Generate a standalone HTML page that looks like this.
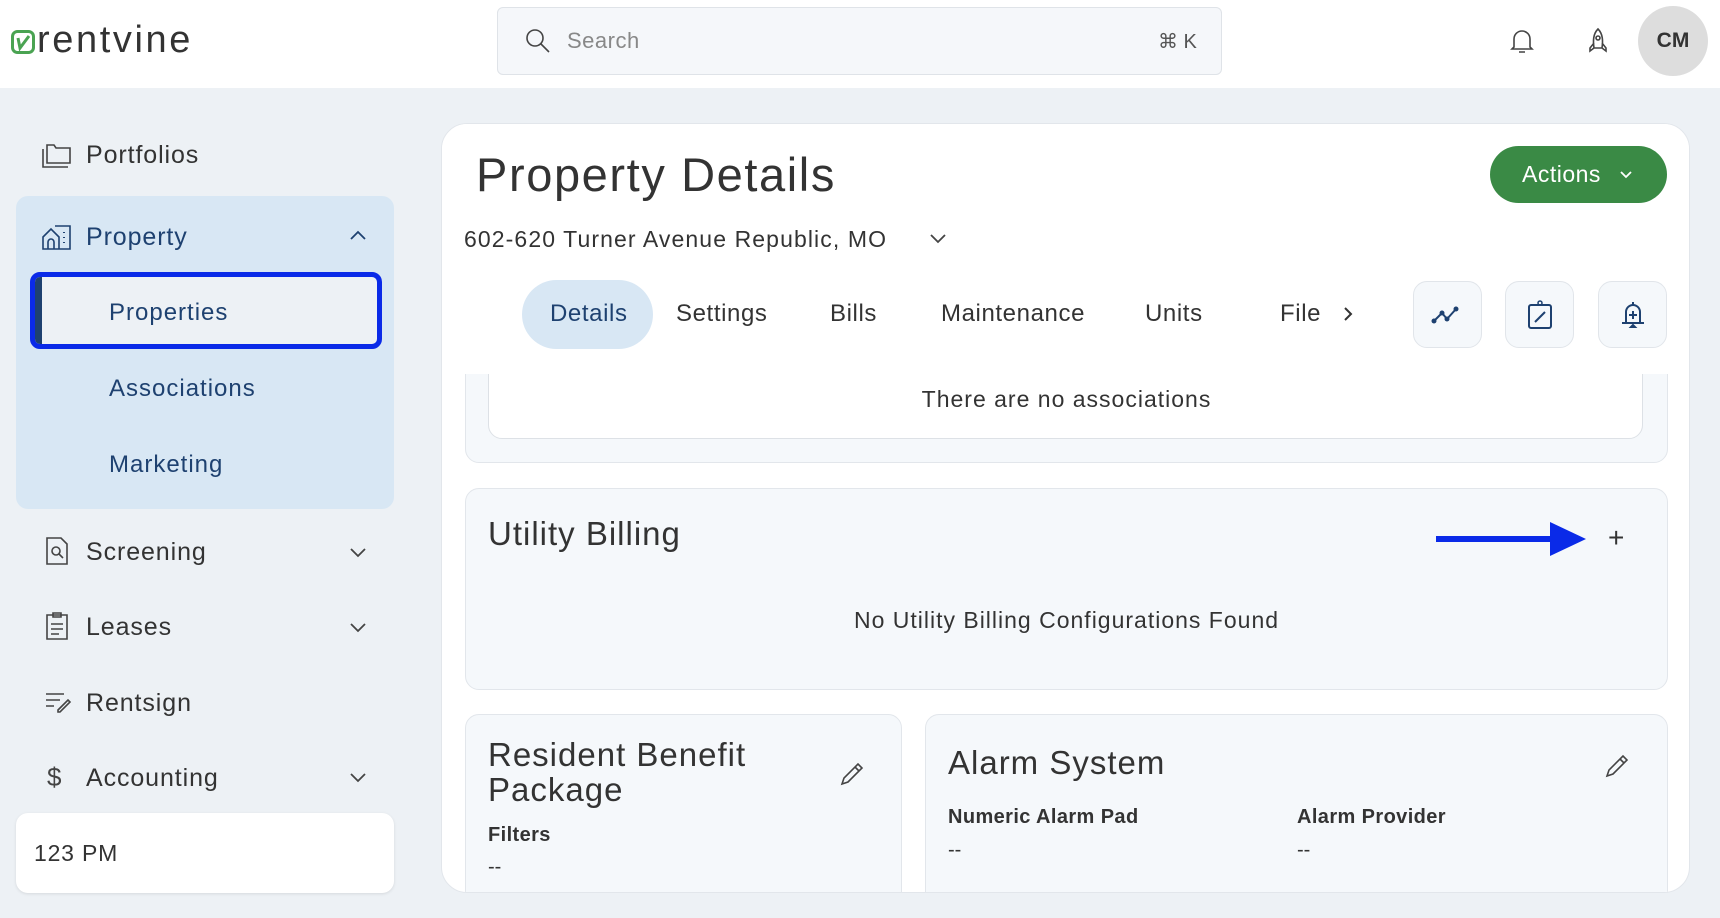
<!DOCTYPE html>
<html><head><meta charset="utf-8"><style>
*{box-sizing:border-box;margin:0;padding:0}
body{width:1720px;height:918px;overflow:hidden;background:#edf1f5;font-family:"Liberation Sans",sans-serif;color:#333;position:relative}
.abs{position:absolute}
.hdr{left:0;top:0;width:1720px;height:88px;background:#fff}
.search{left:497px;top:7px;width:725px;height:68px;border:1px solid #dfe3e8;border-radius:6px;background:#f5f7fa}
.nav{left:86px;font-size:25px;color:#333;letter-spacing:.9px}
.sub{left:109px;font-size:24px;color:#1e4170;letter-spacing:1px}
.card{background:#f5f8fb;border:1px solid #e2e6eb;border-radius:14px}
.tab{top:300px;font-size:24px;color:#333;letter-spacing:.6px}
.ib{top:281px;width:69px;height:67px;border:1px solid #e1e5ea;border-radius:14px;background:#f5f8fb;display:flex;align-items:center;justify-content:center}
.ic{stroke:#444;fill:none;stroke-width:1.6}
</style></head><body>
<div class="abs hdr"></div>
<svg class="abs" style="left:11px;top:30px" width="24" height="24" viewBox="0 0 24 24"><rect x="1.5" y="1.5" width="21" height="21" rx="5" fill="none" stroke="#4aa352" stroke-width="3"/><path d="M7 8 L9 18 L18 6" fill="none" stroke="#4aa352" stroke-width="3"/></svg>
<div class="abs" style="left:37px;top:19px;font-size:38px;color:#333;letter-spacing:2.6px">rentvine</div>
<div class="abs search"></div>
<svg class="abs" style="left:524px;top:27px" width="28" height="28" viewBox="0 0 28 28"><circle cx="11" cy="11" r="8" class="ic" stroke-width="2"/><path d="M17 17 L25 25" class="ic" stroke-width="2"/></svg>
<div class="abs" style="left:567px;top:28px;font-size:22px;color:#888;letter-spacing:.5px">Search</div>
<div class="abs" style="left:1158px;top:29px;font-size:20px;color:#555">⌘ K</div>
<svg class="abs" style="left:1508px;top:26px" width="28" height="30" viewBox="0 0 28 30"><path d="M6 21 V13 a8 8 0 0 1 16 0 V21 L24 23 H4 Z M11 26 h6" class="ic" stroke-width="1.8"/></svg>
<svg class="abs" style="left:1585px;top:26px" width="26" height="30" viewBox="0 0 26 30"><path d="M13 3 C8 8 8 15 9 22 H17 C18 15 18 8 13 3 Z M9 17 L5 22 V25 L9 22 M17 17 L21 22 V25 L17 22" class="ic" stroke-width="1.8"/><circle cx="13" cy="12" r="2" class="ic"/></svg>
<div class="abs" style="left:1638px;top:6px;width:70px;height:70px;border-radius:50%;background:#ddd;font-size:21px;font-weight:bold;color:#333;display:flex;align-items:center;justify-content:center">CM</div>

<!-- sidebar -->
<svg class="abs" style="left:41px;top:141px" width="32" height="28" viewBox="0 0 32 28"><path d="M6 4 H13 L15 7 H29 V22 H6 Z M2 8 V26 H27" class="ic"/></svg>
<div class="abs nav" style="top:141px">Portfolios</div>
<div class="abs" style="left:16px;top:196px;width:378px;height:313px;background:#d8e7f4;border-radius:12px"></div>
<svg class="abs" style="left:41px;top:223px" width="32" height="28" viewBox="0 0 32 28"><path d="M2 14 L10 6 L18 14 V26 H2 Z M7 26 V19 a3 3 0 0 1 6 0 V26 M14 3 H29 V26 H18" fill="none" stroke="#1e4170" stroke-width="1.6"/><path d="M23 9v1M23 14v1M23 19v1" stroke="#1e4170" stroke-width="2"/></svg>
<div class="abs nav" style="top:223px;color:#1e4170">Property</div>
<svg class="abs" style="left:349px;top:229px" width="18" height="12" viewBox="0 0 18 12"><path d="M2 10 L9 3 L16 10" fill="none" stroke="#1e4170" stroke-width="1.8"/></svg>
<div class="abs" style="left:30px;top:272px;width:352px;height:77px;border:5px solid #0a2ae8;border-radius:10px;background:#edf1f5;overflow:hidden"><div style="position:absolute;left:0;top:0;width:7px;height:100%;background:#1e4170"></div></div>
<div class="abs sub" style="top:299px">Properties</div>
<div class="abs sub" style="top:375px">Associations</div>
<div class="abs sub" style="top:451px">Marketing</div>
<svg class="abs" style="left:44px;top:536px" width="26" height="30" viewBox="0 0 26 30"><path d="M3 2 H17 L23 8 V28 H3 Z" class="ic"/><circle cx="12" cy="15" r="4" class="ic"/><path d="M15 18 L19 22" class="ic"/></svg>
<div class="abs nav" style="top:538px">Screening</div>
<svg class="abs" style="left:44px;top:611px" width="26" height="30" viewBox="0 0 26 30"><path d="M3 4 H23 V28 H3 Z M9 2 H17 V6 H9 Z M7 13 H19 M7 18 H19 M7 23 H15" class="ic"/></svg>
<div class="abs nav" style="top:613px">Leases</div>
<svg class="abs" style="left:44px;top:690px" width="28" height="24" viewBox="0 0 28 24"><path d="M2 4 H20 M2 10 H16 M2 16 H10 M14 20 L24 10 L26 12 L16 22 H14 Z" class="ic"/></svg>
<div class="abs nav" style="top:689px">Rentsign</div>
<div class="abs" style="left:47px;top:762px;font-size:26px;color:#444">$</div>
<div class="abs nav" style="top:764px">Accounting</div>
<svg class="abs" style="left:349px;top:546px" width="18" height="12" viewBox="0 0 18 12"><path d="M2 3 L9 10 L16 3" fill="none" stroke="#444" stroke-width="1.8"/></svg>
<svg class="abs" style="left:349px;top:621px" width="18" height="12" viewBox="0 0 18 12"><path d="M2 3 L9 10 L16 3" fill="none" stroke="#444" stroke-width="1.8"/></svg>
<svg class="abs" style="left:349px;top:771px" width="18" height="12" viewBox="0 0 18 12"><path d="M2 3 L9 10 L16 3" fill="none" stroke="#444" stroke-width="1.8"/></svg>
<div class="abs" style="left:16px;top:813px;width:378px;height:80px;background:#fff;border-radius:12px;box-shadow:0 1px 3px rgba(0,0,0,.1)"></div>
<div class="abs" style="left:34px;top:840px;font-size:23px;color:#333;letter-spacing:.8px">123 PM</div>

<!-- main -->
<div class="abs" style="left:441px;top:123px;width:1249px;height:770px;background:#fff;border-radius:26px;border:1px solid #e2e6eb;overflow:hidden">
 <div class="abs card" style="left:23px;top:180px;width:1203px;height:159px;border-radius:14px"></div>
 <div class="abs" style="left:46px;top:180px;width:1155px;height:135px;background:#fff;border:1px solid #dde1e6;border-radius:0 0 14px 14px"></div>
 <div class="abs" style="left:0;top:0;width:1249px;height:250px;background:#fff"></div>
 <div class="abs" style="left:0;top:262px;width:1249px;text-align:center;font-size:23px;color:#333;letter-spacing:1px">There are no associations</div>
 <div class="abs card" style="left:23px;top:364px;width:1203px;height:202px"></div>
 <div class="abs" style="left:46px;top:391px;font-size:33px;color:#333;letter-spacing:1px">Utility Billing</div>
 <div class="abs" style="left:0;top:483px;width:1249px;text-align:center;font-size:23px;color:#333;letter-spacing:1px">No Utility Billing Configurations Found</div>
 <div class="abs card" style="left:23px;top:590px;width:437px;height:200px"></div>
 <div class="abs card" style="left:483px;top:590px;width:743px;height:200px"></div>
 <div class="abs" style="left:46px;top:613px;font-size:33px;line-height:35px;color:#333;letter-spacing:1px">Resident Benefit<br>Package</div>
 <div class="abs" style="left:46px;top:700px;font-size:20px;font-weight:bold;color:#333;letter-spacing:.4px">Filters</div>
 <div class="abs" style="left:46px;top:732px;font-size:20px">--</div>
 <div class="abs" style="left:506px;top:620px;font-size:33px;color:#333;letter-spacing:1px">Alarm System</div>
 <div class="abs" style="left:506px;top:682px;font-size:20px;font-weight:bold;letter-spacing:.4px">Numeric Alarm Pad</div>
 <div class="abs" style="left:855px;top:682px;font-size:20px;font-weight:bold;letter-spacing:.4px">Alarm Provider</div>
 <div class="abs" style="left:506px;top:715px;font-size:20px">--</div>
 <div class="abs" style="left:855px;top:715px;font-size:20px">--</div>
 <svg class="abs" style="left:396px;top:636px" width="28" height="28" viewBox="0 0 28 28"><path d="M4 24 L6 18 L20 4 L24 8 L10 22 Z M17 7 L21 11" class="ic" stroke-width="1.8"/></svg>
 <svg class="abs" style="left:1161px;top:628px" width="28" height="28" viewBox="0 0 28 28"><path d="M4 24 L6 18 L20 4 L24 8 L10 22 Z M17 7 L21 11" class="ic" stroke-width="1.8"/></svg>
</div>
<div class="abs" style="left:476px;top:147px;font-size:47px;color:#333;letter-spacing:1.6px">Property Details</div>
<div class="abs" style="left:1490px;top:146px;width:177px;height:57px;border-radius:29px;background:#3a8a45;color:#fff;font-size:23px;display:flex;align-items:center;padding-left:32px;letter-spacing:.5px">Actions<svg style="margin-left:18px" width="14" height="10" viewBox="0 0 14 10"><path d="M2 2 L7 7 L12 2" fill="none" stroke="#fff" stroke-width="1.8"/></svg></div>
<div class="abs" style="left:464px;top:226px;font-size:23px;color:#333;letter-spacing:1.1px">602-620 Turner Avenue Republic, MO</div>
<svg class="abs" style="left:929px;top:232px" width="18" height="12" viewBox="0 0 18 12"><path d="M2 3 L9 10 L16 3" fill="none" stroke="#444" stroke-width="1.8"/></svg>
<div class="abs" style="left:522px;top:280px;width:131px;height:69px;border-radius:35px;background:#d8e7f4"></div>
<div class="abs tab" style="left:550px;color:#1e4170">Details</div>
<div class="abs tab" style="left:676px">Settings</div>
<div class="abs tab" style="left:830px">Bills</div>
<div class="abs tab" style="left:941px">Maintenance</div>
<div class="abs tab" style="left:1145px">Units</div>
<div class="abs tab" style="left:1280px">File</div>
<svg class="abs" style="left:1342px;top:306px" width="12" height="16" viewBox="0 0 12 16"><path d="M3 2 L9 8 L3 14" fill="none" stroke="#333" stroke-width="2"/></svg>
<div class="abs ib" style="left:1413px"><svg width="34" height="22" viewBox="0 0 34 22"><path d="M3 17 L11 9 L16 15 L25 5" fill="none" stroke="#1e4170" stroke-width="2"/><circle cx="3" cy="17" r="2.5" fill="#1e4170"/><circle cx="11" cy="9" r="2.5" fill="#1e4170"/><circle cx="16" cy="15" r="2.5" fill="#1e4170"/><circle cx="25" cy="5" r="2.5" fill="#1e4170"/></svg></div>
<div class="abs ib" style="left:1505px"><svg width="26" height="30" viewBox="0 0 26 30"><rect x="2" y="5" width="22" height="23" rx="2" fill="none" stroke="#1e4170" stroke-width="2"/><circle cx="13" cy="3" r="2" fill="none" stroke="#1e4170" stroke-width="1.5"/><path d="M8 22 L18 12" stroke="#1e4170" stroke-width="2"/></svg></div>
<div class="abs ib" style="left:1598px"><svg width="24" height="30" viewBox="0 0 24 30"><path d="M5 23 V12 a7 7 0 0 1 14 0 V23 M1 23 H23 M12 2 v3 M12 25 l-2 2 h4z" fill="none" stroke="#1e4170" stroke-width="2"/><path d="M12 11 v8 M8 15 h8" stroke="#1e4170" stroke-width="2"/></svg></div>
<svg class="abs" style="left:1434px;top:521px" width="152" height="36" viewBox="0 0 152 36"><path d="M2 18 H120" stroke="#0a2ae8" stroke-width="6"/><path d="M116 1 L152 18 L116 35 Z" fill="#0a2ae8"/></svg>
<div class="abs" style="left:1608px;top:522px;font-size:28px;color:#333">+</div>
</body></html>
